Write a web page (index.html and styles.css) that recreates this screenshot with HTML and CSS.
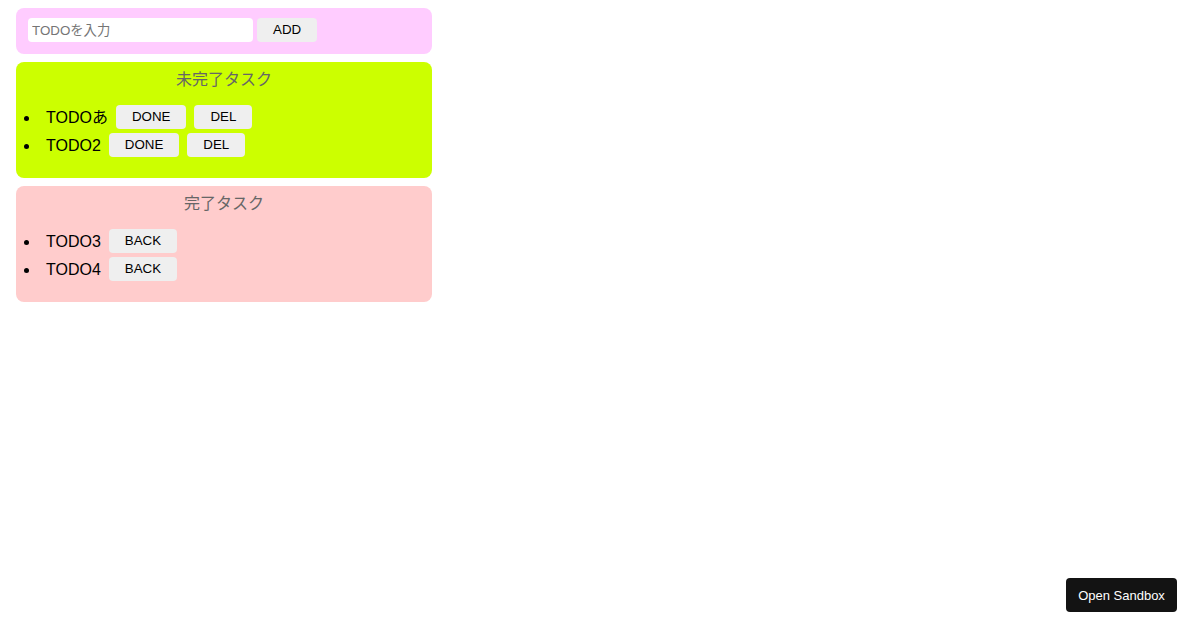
FILE: index.html
```html
<!DOCTYPE html>
<html lang="ja">
<head>
<meta charset="utf-8">
<title>TODO</title>
<link rel="stylesheet" href="styles.css">
</head>
<body>
  <div class="input-area">
    <input class="todo-input" type="text" placeholder="TODOを入力">
    <button class="btn">ADD</button>
  </div>

  <div class="area incomplete-area">
    <p class="title">未完了タスク</p>
    <ul class="list">
      <li>
        <div class="list-row">
          <span class="todo-item">TODOあ</span>
          <button class="btn">DONE</button>
          <button class="btn">DEL</button>
        </div>
      </li>
      <li>
        <div class="list-row">
          <span class="todo-item">TODO2</span>
          <button class="btn">DONE</button>
          <button class="btn">DEL</button>
        </div>
      </li>
    </ul>
  </div>

  <div class="area complete-area">
    <p class="title">完了タスク</p>
    <ul class="list">
      <li>
        <div class="list-row">
          <span class="todo-item">TODO3</span>
          <button class="btn">BACK</button>
        </div>
      </li>
      <li>
        <div class="list-row">
          <span class="todo-item">TODO4</span>
          <button class="btn">BACK</button>
        </div>
      </li>
    </ul>
  </div>

  <a class="sandbox-btn">Open Sandbox</a>
</body>
</html>
```

FILE: styles.css
```css
* {
  box-sizing: border-box;
}

body {
  margin: 0;
  padding: 8px 0 0 16px;
  background: #ffffff;
  font-family: "Liberation Sans", Arial, "Noto Sans CJK JP", sans-serif;
  color: #000000;
}

.input-area {
  width: 416px;
  height: 46px;
  padding: 10px 8px 10px 12px;
  margin-bottom: 8px;
  background-color: #ffccff;
  border-radius: 8px;
  display: flex;
  align-items: flex-start;
  gap: 4px;
}

.todo-input {
  width: 225px;
  height: 24px;
  border: none;
  outline: none;
  border-radius: 4px;
  padding: 0 4px;
  background: #ffffff;
  font-family: "Liberation Sans", Arial, "Noto Sans CJK JP", sans-serif;
  font-size: 13.33px;
  color: #000000;
}

.todo-input::placeholder {
  color: #757575;
}

.btn {
  height: 24px;
  padding: 0 16px;
  border: none;
  border-radius: 4px;
  background-color: #efefef;
  color: #000000;
  font-family: "Liberation Sans", Arial, sans-serif;
  font-size: 13.33px;
  line-height: 24px;
  margin: 0;
}

.area {
  width: 416px;
  height: 116px;
  padding: 8px;
  margin-bottom: 8px;
  border-radius: 8px;
}

.incomplete-area {
  background-color: #ccff00;
}

.complete-area {
  background-color: #ffcccc;
}

.title {
  margin: 0;
  text-align: center;
  font-size: 16px;
  line-height: 19px;
  color: #666666;
}

.list {
  margin: 16px 0 0;
  padding-left: 16px;
  font-size: 16px;
}

.list-row {
  display: flex;
  align-items: center;
  gap: 8px;
  padding-bottom: 4px;
}

.todo-item {
  margin-left: 6px;
  line-height: 19px;
}

.sandbox-btn {
  position: fixed;
  right: 23px;
  bottom: 18px;
  width: 111px;
  height: 34px;
  display: flex;
  align-items: center;
  justify-content: center;
  background-color: #131313;
  color: #ffffff;
  border-radius: 4px;
  font-family: "Liberation Sans", Arial, sans-serif;
  font-size: 13px;
}
```
